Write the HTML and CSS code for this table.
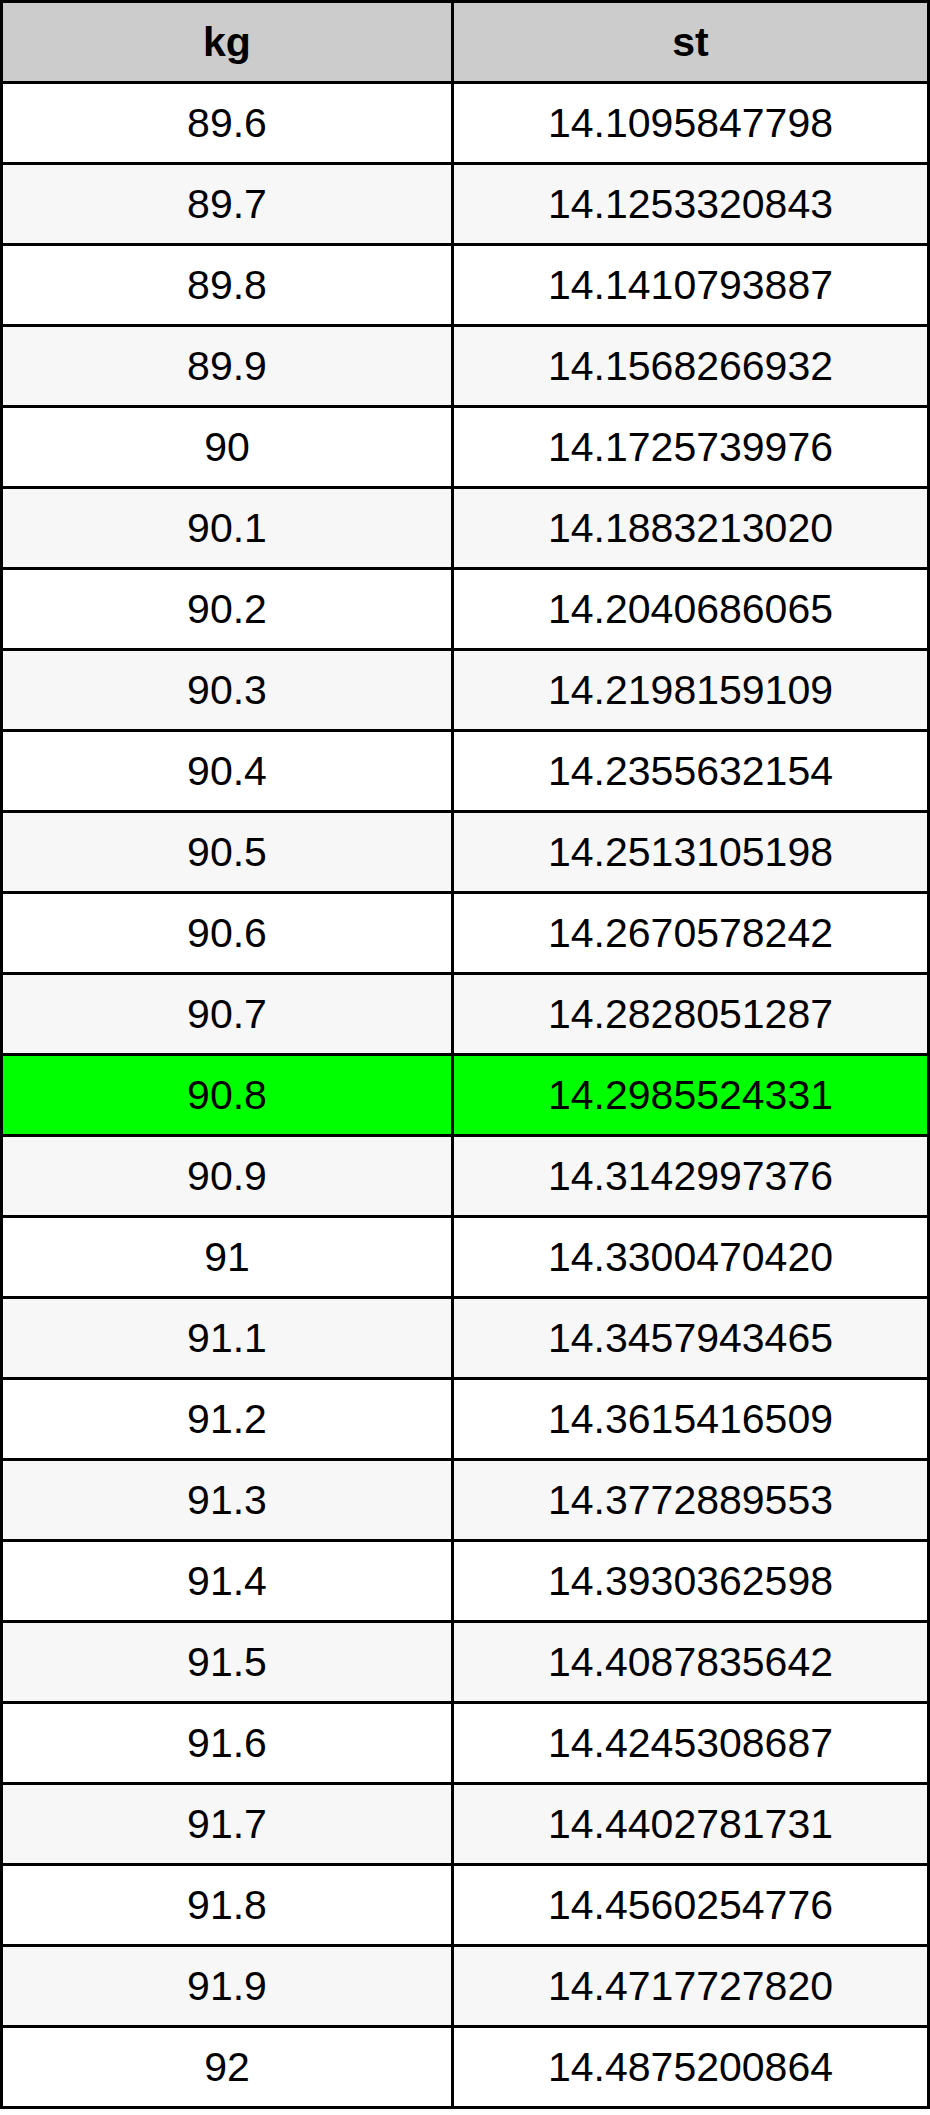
FILE: index.html
```html
<!DOCTYPE html>
<html>
<head>
<meta charset="utf-8">
<link rel="stylesheet" href="styles.css">
</head>
<body>
<div class="table">
  <div class="cell head">kg</div><div class="cell head">st</div>
  <div class="cell">89.6</div><div class="cell">14.1095847798</div>
  <div class="cell alt">89.7</div><div class="cell alt">14.1253320843</div>
  <div class="cell">89.8</div><div class="cell">14.1410793887</div>
  <div class="cell alt">89.9</div><div class="cell alt">14.1568266932</div>
  <div class="cell">90</div><div class="cell">14.1725739976</div>
  <div class="cell alt">90.1</div><div class="cell alt">14.1883213020</div>
  <div class="cell">90.2</div><div class="cell">14.2040686065</div>
  <div class="cell alt">90.3</div><div class="cell alt">14.2198159109</div>
  <div class="cell">90.4</div><div class="cell">14.2355632154</div>
  <div class="cell alt">90.5</div><div class="cell alt">14.2513105198</div>
  <div class="cell">90.6</div><div class="cell">14.2670578242</div>
  <div class="cell alt">90.7</div><div class="cell alt">14.2828051287</div>
  <div class="cell hl">90.8</div><div class="cell hl">14.2985524331</div>
  <div class="cell alt">90.9</div><div class="cell alt">14.3142997376</div>
  <div class="cell">91</div><div class="cell">14.3300470420</div>
  <div class="cell alt">91.1</div><div class="cell alt">14.3457943465</div>
  <div class="cell">91.2</div><div class="cell">14.3615416509</div>
  <div class="cell alt">91.3</div><div class="cell alt">14.3772889553</div>
  <div class="cell">91.4</div><div class="cell">14.3930362598</div>
  <div class="cell alt">91.5</div><div class="cell alt">14.4087835642</div>
  <div class="cell">91.6</div><div class="cell">14.4245308687</div>
  <div class="cell alt">91.7</div><div class="cell alt">14.4402781731</div>
  <div class="cell">91.8</div><div class="cell">14.4560254776</div>
  <div class="cell alt">91.9</div><div class="cell alt">14.4717727820</div>
  <div class="cell">92</div><div class="cell">14.4875200864</div>
</div>
</body>
</html>
```

FILE: styles.css
```css
html, body {
  margin: 0;
  padding: 0;
  background: #ffffff;
}

.table {
  display: grid;
  grid-template-columns: 448px 473px;
  grid-auto-rows: 78px;
  gap: 3px;
  padding: 3px;
  width: 930px;
  box-sizing: border-box;
  background: #000000;
  font-family: "Liberation Sans", Arial, sans-serif;
  font-size: 41px;
  color: #000000;
}

.cell {
  display: flex;
  align-items: center;
  justify-content: center;
  background: #ffffff;
}

.cell.head {
  background: #cccccc;
  font-weight: bold;
}

.cell.alt {
  background: #f7f7f7;
}

.cell.hl {
  background: #00ff00;
}
```
